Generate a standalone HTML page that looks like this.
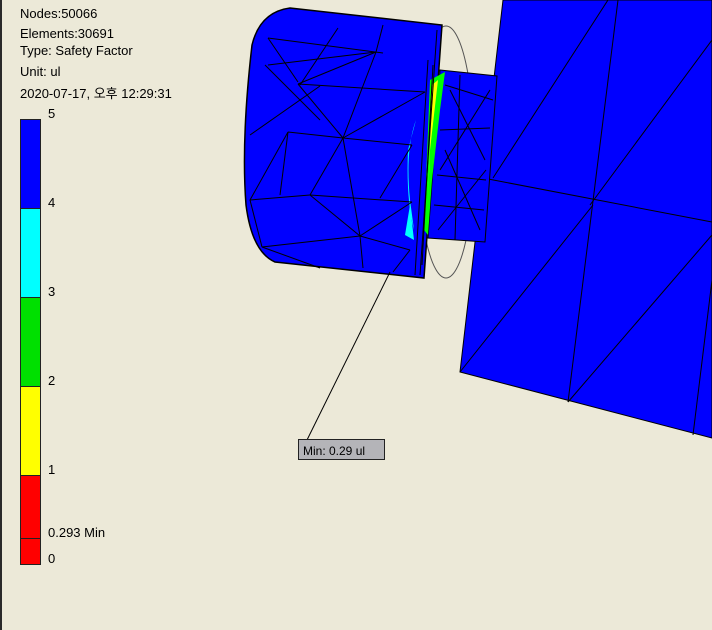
<!DOCTYPE html>
<html><head><meta charset="utf-8"><style>
html,body{margin:0;padding:0;width:712px;height:630px;overflow:hidden;background:#ECE9D8;}
body{position:relative;font-family:Tahoma,"Liberation Sans","Noto Sans CJK KR",sans-serif;font-size:13px;color:#000;}
.t{position:absolute;left:20px;white-space:nowrap;}
.l{position:absolute;left:48px;white-space:nowrap;}
</style></head><body>
<div style="position:absolute;left:0;top:0;width:2px;height:630px;background:#2a2a2a"></div>
<svg width="712" height="630" style="position:absolute;left:0;top:0">
<!-- ghost circle -->
<ellipse cx="446" cy="152" rx="28" ry="126" fill="none" stroke="#555" stroke-width="1"/>
<!-- plate -->
<polygon points="503,0 712,0 712,438 460,372" fill="#0000ff" stroke="#000" stroke-width="1"/>
<g stroke="#000" stroke-width="1" fill="none">
<line x1="608" y1="0" x2="493" y2="178"/><line x1="618" y1="0" x2="568" y2="402"/>
<line x1="712" y1="40" x2="590" y2="205"/><line x1="483" y1="178" x2="712" y2="222"/>
<line x1="593" y1="205" x2="460" y2="372"/><line x1="712" y1="235" x2="568" y2="402"/>
<line x1="712" y1="280" x2="693" y2="435"/>
</g>
<!-- neck -->
<polygon points="440,70 497,76 485,242 428,238" fill="#0000ff" stroke="#000"/>
<g stroke="#000" stroke-width="1" fill="none">
<line x1="445" y1="85" x2="493" y2="100"/><line x1="440" y1="130" x2="490" y2="128"/>
<line x1="437" y1="175" x2="486" y2="180"/><line x1="434" y1="205" x2="484" y2="210"/>
<line x1="450" y1="90" x2="485" y2="160"/><line x1="445" y1="150" x2="480" y2="230"/>
<line x1="490" y1="90" x2="440" y2="170"/><line x1="486" y1="170" x2="438" y2="230"/>
<line x1="460" y1="75" x2="455" y2="240"/>
</g>
<!-- cylinder -->
<path d="M290,8 L442,25 L424,278 L275,262 Q252,252 246,205 Q241,140 252,45 Q260,12 290,8 Z" fill="#0000ff" stroke="#000" stroke-width="1.5"/>
<path d="M416,120 Q405,150 410,200 L414,230 Q406,200 408,150 Z" fill="#00ffff"/>
<path d="M410,205 L414,240 L405,235 Z" fill="#00ffff"/>
<path d="M430,80 L445,72 L440,110 L432,180 L428,235 L424,230 Z" fill="#00ff00"/>
<path d="M432,85 L438,80 L430,150 L428,200 Z" fill="#ffff00"/>
<g stroke="#000" stroke-width="1" fill="none">
<line x1="437" y1="30" x2="420" y2="275"/><line x1="428" y1="60" x2="415" y2="275"/>
<line x1="433" y1="65" x2="422" y2="265"/>
<line x1="338" y1="28" x2="300" y2="85"/><line x1="383" y1="25" x2="376" y2="52"/>
<line x1="268" y1="38" x2="383" y2="53"/><line x1="268" y1="38" x2="298" y2="82"/>
<line x1="298" y1="84" x2="376" y2="52"/><line x1="298" y1="84" x2="425" y2="92"/>
<line x1="265" y1="65" x2="320" y2="120"/><line x1="268" y1="65" x2="376" y2="52"/>
<line x1="288" y1="132" x2="343" y2="138"/><line x1="343" y1="138" x2="412" y2="145"/>
<line x1="250" y1="135" x2="320" y2="86"/><line x1="343" y1="138" x2="298" y2="84"/>
<line x1="343" y1="138" x2="376" y2="52"/><line x1="343" y1="138" x2="425" y2="92"/>
<line x1="288" y1="132" x2="280" y2="195"/><line x1="343" y1="138" x2="310" y2="195"/>
<line x1="250" y1="200" x2="310" y2="195"/><line x1="310" y1="195" x2="412" y2="202"/>
<line x1="343" y1="138" x2="360" y2="236"/><line x1="310" y1="195" x2="360" y2="236"/>
<line x1="250" y1="200" x2="262" y2="247"/><line x1="262" y1="247" x2="360" y2="236"/>
<line x1="360" y1="236" x2="410" y2="250"/><line x1="412" y1="202" x2="360" y2="236"/>
<line x1="412" y1="145" x2="380" y2="198"/><line x1="288" y1="132" x2="250" y2="200"/>
<line x1="262" y1="247" x2="320" y2="268"/><line x1="360" y1="236" x2="363" y2="268"/>
<line x1="410" y1="250" x2="393" y2="272"/>
</g>
<!-- leader -->
<line x1="390" y1="272" x2="307" y2="440" stroke="#000"/>
<rect x="298.5" y="439.5" width="86" height="20" fill="#b4b4b8" stroke="#222"/>
<text x="303" y="455" font-family="Tahoma,'Liberation Sans',sans-serif" font-size="12" fill="#000">Min: 0.29 ul</text>
<!-- legend -->
<rect x="20.5" y="119.5" width="20" height="89" fill="#0000ff" stroke="#222"/>
<rect x="20.5" y="208.5" width="20" height="89" fill="#00ffff" stroke="#222"/>
<rect x="20.5" y="297.5" width="20" height="89" fill="#00e000" stroke="#222"/>
<rect x="20.5" y="386.5" width="20" height="89" fill="#ffff00" stroke="#222"/>
<rect x="20.5" y="475.5" width="20" height="63" fill="#ff0000" stroke="#222"/>
<rect x="20.5" y="538.5" width="20" height="26" fill="#ff0000" stroke="#222"/>
</svg>
<div class="t" style="top:6px">Nodes:50066</div>
<div class="t" style="top:26px">Elements:30691</div>
<div class="t" style="top:43px">Type: Safety Factor</div>
<div class="t" style="top:64px">Unit: ul</div>
<div class="t" style="top:83px">2020-07-17, 오후 12:29:31</div>
<div class="l" style="top:106px">5</div>
<div class="l" style="top:195px">4</div>
<div class="l" style="top:284px">3</div>
<div class="l" style="top:373px">2</div>
<div class="l" style="top:462px">1</div>
<div class="l" style="top:525px">0.293 Min</div>
<div class="l" style="top:551px">0</div>
</body></html>
